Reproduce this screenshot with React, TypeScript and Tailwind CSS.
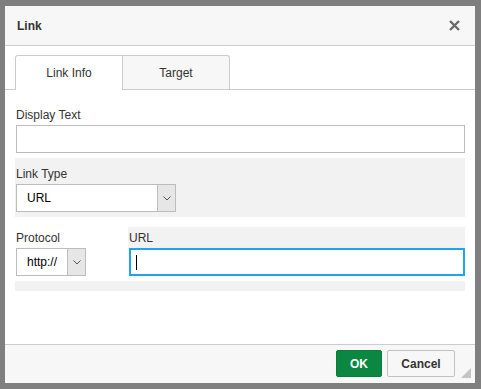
import React from 'react';

const font = { fontFamily: '"Liberation Sans", Arial, sans-serif' };

const Chevron = () => (
  <svg width="8" height="5" viewBox="0 0 8 5" fill="none">
    <path d="M0.5 0.5 L4 4 L7.5 0.5" stroke="#555" strokeWidth="1" />
  </svg>
);

interface SelectBoxProps {
  value: string;
  width: string;
}

const SelectBox = ({ value, width }: SelectBoxProps) => (
  <div className={`flex h-[28px] ${width} border border-[#bcbcbc] bg-white`}>
    <div className="flex flex-1 items-center pl-[10px] text-[12px] text-black">{value}</div>
    <div className="flex w-[18px] items-center justify-center border-l border-[#bcbcbc] bg-[#e6e6e6]">
      <Chevron />
    </div>
  </div>
);

const App = () => {
  return (
    <div className="h-[389px] w-[481px] bg-[#7f7f7f] pl-[5px] pt-[6px]" style={font}>
      <div className="relative flex h-[377px] w-[470px] flex-col bg-white text-[#333]">
        {/* header */}
        <div className="flex h-[40px] items-center justify-between border-b border-[#cccccc] bg-[#f7f7f7] pl-[12px] pr-[15px]">
          <span className="text-[12px] font-bold text-[#333]">Link</span>
          <svg width="11" height="11" viewBox="0 0 11 11">
            <path d="M1 1 L10 10 M10 1 L1 10" stroke="#6a6a6a" strokeWidth="2.4" />
          </svg>
        </div>

        {/* body */}
        <div className="flex-1">
          <div className="flex border-b border-[#cccccc] pl-[10px] pt-[9px]">
            <div className="-mb-px flex h-[35px] w-[108px] items-center justify-center rounded-tl-[3px] border border-b-0 border-[#cccccc] bg-white text-[12px] text-[#333]">
              Link Info
            </div>
            <div className="flex h-[34px] w-[107px] items-center justify-center rounded-tr-[3px] border border-l-0 border-b-0 border-[#cccccc] bg-[#f7f7f7] text-[12px] text-[#333]">
              Target
            </div>
          </div>

          <div className="px-[10px]">
            {/* display text */}
            <div className="pl-px pt-[17px]">
              <div className="mb-[2px] h-[16px] text-[12px] leading-[16px]">Display Text</div>
              <div className="h-[28px] w-full border border-[#bcbcbc] bg-white" />
            </div>

            {/* link type */}
            <div className="mt-[5px] bg-[#f2f2f2] pb-[5px] pl-px pt-[8px]">
              <div className="mb-[2px] h-[16px] text-[12px] leading-[16px]">Link Type</div>
              <SelectBox value="URL" width="w-[160px]" />
            </div>

            {/* protocol + url */}
            <div className="mt-[10px] flex">
              <div className="w-[113px] pl-px pt-[3px]">
                <div className="mb-[2px] h-[16px] text-[12px] leading-[16px]">Protocol</div>
                <SelectBox value="http://" width="w-[70px]" />
              </div>
              <div className="flex-1">
                <div className="h-[21px] bg-[#f2f2f2] pl-px pt-[3px] text-[12px] leading-[16px]">URL</div>
                <div className="ml-px flex h-[28px] items-center border-2 border-[#1ea2f4] bg-white pl-[5px]">
                  <span className="h-[15px] w-px bg-black" />
                </div>
              </div>
            </div>
            <div className="mt-[5px] h-[10px] bg-[#f2f2f2]" />
          </div>
        </div>

        {/* footer */}
        <div className="flex h-[39px] justify-end gap-[5px] border-t border-[#cccccc] bg-[#f7f7f7] pr-[20px] pt-[5px]">
          <div className="flex h-[27px] w-[46px] items-center justify-center rounded-[2px] border border-[#0a7d3c] bg-[#0b8742] text-[12px] font-bold text-white">
            OK
          </div>
          <div className="flex h-[27px] w-[68px] items-center justify-center rounded-[2px] border border-[#c2c2c2] bg-[#f7f7f7] text-[12px] font-bold text-[#333]">
            Cancel
          </div>
        </div>
        <svg className="absolute bottom-[5px] right-[4px]" width="10" height="10" viewBox="0 0 10 10">
          <path d="M10 0 L10 10 L0 10 Z" fill="#c4c4c4" />
        </svg>
      </div>
    </div>
  );
};

export default App;
